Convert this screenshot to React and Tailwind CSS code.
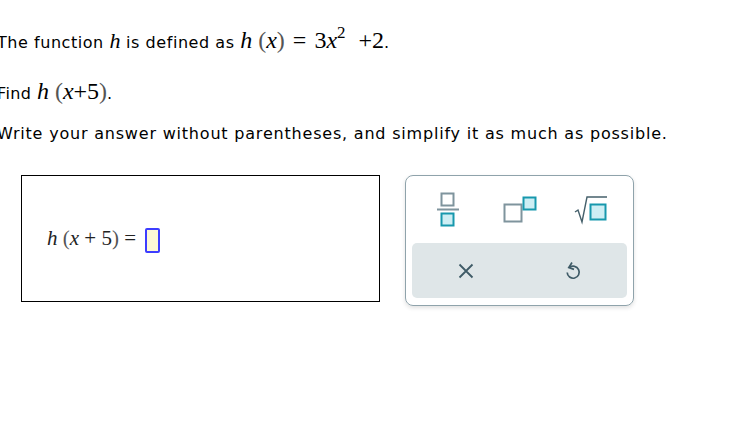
import React from 'react';

const sans = { fontFamily: '"DejaVu Sans", Verdana, sans-serif' };

const M = ({ children, className = '' }) => (
  <span className={`font-['Liberation_Serif',serif] tracking-normal ${className}`}>{children}</span>
);

const P = ({ children }) => <span className="text-[#555]">{children}</span>;

const FractionIcon = () => (
  <svg width="24" height="36" viewBox="0 0 24 36">
    <rect x="5.5" y="1.5" width="12" height="12" fill="#fff" stroke="#7f949d" strokeWidth="2" />
    <rect x="1" y="16.5" width="22" height="2" fill="#7f949d" />
    <rect x="5.5" y="21.5" width="12" height="12" fill="#cdeef4" stroke="#1798ad" strokeWidth="2" />
  </svg>
);

const PowerIcon = () => (
  <svg width="36" height="30" viewBox="0 0 36 30">
    <rect x="2.5" y="9.5" width="17" height="17" fill="#fff" stroke="#7f949d" strokeWidth="2" />
    <rect x="21.5" y="2.5" width="12" height="12" fill="#cdeef4" stroke="#1798ad" strokeWidth="2" />
  </svg>
);

const SqrtIcon = () => (
  <svg width="34" height="30" viewBox="0 0 34 30">
    <path d="M1 17 L4 15 L8 27 L13 2 H33" fill="none" stroke="#45606b" strokeWidth="1.4" />
    <rect x="16.5" y="9.5" width="15" height="15" fill="#cdeef4" stroke="#1798ad" strokeWidth="2" />
  </svg>
);

const TimesIcon = () => (
  <svg width="18" height="18" viewBox="0 0 18 18">
    <path d="M2.5 2.5 L15.5 15.5 M15.5 2.5 L2.5 15.5" stroke="#3f5b67" strokeWidth="1.8" />
  </svg>
);

const UndoIcon = () => (
  <svg width="18" height="20" viewBox="0 0 18 20">
    <path d="M5.5 6.5 A6 6 0 1 1 3.2 11.5" fill="none" stroke="#3f5b67" strokeWidth="1.7" />
    <path d="M8 1.5 L4.8 6.6 L10 8.4" fill="none" stroke="#3f5b67" strokeWidth="1.7" />
  </svg>
);

export default function App() {
  return (
    <div className="w-[743px] h-[421px] bg-white text-black overflow-hidden">
      <div className="-ml-[3px] pt-[27px]" style={sans}>
        <p className="text-[16px] leading-[26px] tracking-[0.55px]">
          The function <M className="italic text-[22px]">h</M> is defined as{' '}
          <M className="text-[24px]">
            <i>h</i> <P>(</P><i>x</i><P>)</P> <span className="mx-[2px]">=</span> 3<i>x</i>
            <sup className="text-[17px] -top-[0.6em]">2</sup>
            <span className="ml-[13px]">+</span>2
          </M>
          .
        </p>
        <p className="text-[16px] leading-[26px] mt-[22px] tracking-[0.4px]">
          Find{' '}
          <M className="text-[24px]">
            <i>h</i> <P>(</P><i>x</i>+5<P>)</P>
          </M>
          .
        </p>
        <p className="text-[16px] leading-[26px] mt-[14px] tracking-[0.8px]">
          Write your answer without parentheses, and simplify it as much as possible.
        </p>
      </div>

      <div className="flex items-start mt-[28px] ml-[21px] gap-[25px]">
        <div className="w-[359px] h-[127px] border border-black flex items-center pl-[25px]">
          <M className="text-[21px] text-[#222]">
            <i>h</i> <P>(</P><i>x</i> + 5<P>)</P> ={' '}
          </M>
          <div className="ml-[9px] mt-[3px] w-[15px] h-[25px] border-2 border-[#3d3dff] bg-[#fdf9d6] rounded-[2px]" />
        </div>

        <div className="w-[229px] h-[131px] rounded-[8px] border border-[#8fa3ab] shadow-[0_2px_4px_rgba(0,0,0,0.12)] px-[6px] pt-[15px] pb-[7px] flex flex-col">
          <div className="flex items-center justify-center h-[38px]">
            <div className="w-[73px] flex justify-center"><FractionIcon /></div>
            <div className="w-[73px] flex justify-center"><PowerIcon /></div>
            <div className="w-[73px] flex justify-center"><SqrtIcon /></div>
          </div>
          <div className="mt-auto h-[55px] rounded-[5px] bg-[#dfe6e8] grid grid-cols-2 items-center justify-items-center">
            <TimesIcon />
            <UndoIcon />
          </div>
        </div>
      </div>
    </div>
  );
}
